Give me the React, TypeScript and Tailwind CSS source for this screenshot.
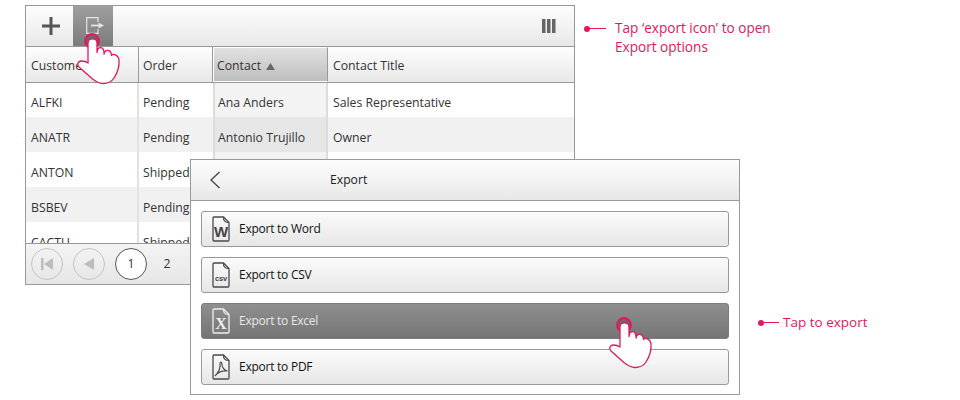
import React from "react";

const PINK = "#e0195f";

function Hand({ className }: { className: string }) {
  return (
    <svg className={className} width="60" height="85" viewBox="0 0 60 85" fill="none">
      <circle cx="22" cy="36" r="6.8" fill="#555" fillOpacity="0.55" stroke={PINK} strokeWidth="2.2" />
      <path
        d="M18 58 L18 38 C18 32.5 27 32.5 27 38 L27 47.5 C27.5 41 33.5 41 34 47.5 L34 49 C35 44 41 44 41.5 50.5 C42.5 48.5 48.5 49.5 49 55 C49.5 61 47.5 67.5 44 73 C41 77.5 38 78.5 33 78.5 C28 78.5 25 76 22 73.5 L9 62 C6.5 59.5 8 56 11.5 56 C14 56 16 56.5 18 58 Z"
        fill="#fff"
        stroke={PINK}
        strokeWidth="1.3"
        strokeLinejoin="round"
      />
    </svg>
  );
}

function Doc({ children, stroke = "#4a4a4a" }: { children?: React.ReactNode; stroke?: string }) {
  return (
    <svg width="18" height="26" viewBox="0 0 18 26" fill="none" className="shrink-0">
      <path d="M1 2 Q1 1 2 1 L11.5 1 L17 6.5 L17 24 Q17 25 16 25 L2 25 Q1 25 1 24 Z" stroke={stroke} strokeWidth="1.3" fill="none" />
      <path d="M11.5 1 Q11 6.5 17 6.5" stroke={stroke} strokeWidth="1.1" />
      {children}
    </svg>
  );
}

const rows = [
  ["ALFKI", "Pending", "Ana Anders", "Sales Representative"],
  ["ANATR", "Pending", "Antonio Trujillo", "Owner"],
  ["ANTON", "Shipped", "Antonio Moreno", "Owner"],
  ["BSBEV", "Pending", "Elizabeth Brown", "Sales Representative"],
  ["CACTU", "Shipped", "Patricio Simpson", "Sales Agent"],
];

function ExportButton({ label, icon, active }: { label: string; icon: React.ReactNode; active?: boolean }) {
  return (
    <div
      className={
        active
          ? "flex h-[36px] items-center gap-[9px] rounded-[3px] border border-[#7c7c7c] bg-gradient-to-b from-[#8f8f8f] to-[#757575] pl-[10px] text-[12px] tracking-[-0.25px] text-[#e8e8e8]"
          : "flex h-[36px] items-center gap-[9px] rounded-[3px] border border-[#999] bg-gradient-to-b from-[#fbfbfb] to-[#e6e6e6] pl-[10px] text-[12px] tracking-[-0.25px] text-[#111]"
      }
    >
      {icon}
      <span>{label}</span>
    </div>
  );
}

export default function App() {
  return (
    <div
      className="relative flex h-[400px] w-[960px] items-start overflow-hidden bg-white pt-[5px] pl-[25px] text-[#333]"
      style={{ fontFamily: '"Open Sans", "Noto Sans", sans-serif' }}
    >
      {/* Grid window */}
      <div className="flex h-[280px] w-[550px] shrink-0 flex-col border border-[#999] text-[12.25px]">
        <div className="flex h-[40px] shrink-0 items-stretch bg-gradient-to-b from-[#fdfdfd] to-[#e8e8e8]">
          <div className="flex w-[47px] items-center justify-center">
            <svg width="18" height="18" viewBox="0 0 18 18" className="ml-[3px]">
              <path d="M7.5 0h3v7.5H18v3h-7.5V18h-3v-7.5H0v-3h7.5z" fill="#555" />
            </svg>
          </div>
          <div className="flex w-[40px] items-start justify-start bg-gradient-to-b from-[#9e9e9e] to-[#7c7c7c] pt-[11px] pl-[13px]">
            <svg width="18" height="17" viewBox="0 0 18 17" fill="none">
              <path d="M12 5V0.7H0.7v15.6H12V12" stroke="#e4e4e4" strokeWidth="1.2" />
              <path d="M5 8.5h8" stroke="#e4e4e4" strokeWidth="1.8" />
              <path d="M12.5 5.5 L18 8.5 L12.5 11.5 Z" fill="#e4e4e4" />
            </svg>
          </div>
          <div className="flex flex-1 items-center justify-end pr-[18px]">
            <svg width="14" height="14" viewBox="0 0 14 14">
              <path d="M0 0h3.5v14H0zM5 0h3.5v14H5zM10 0h3.5v14H10z" fill="#666" />
            </svg>
          </div>
        </div>

        <div className="flex h-[37px] shrink-0 border-y border-[#999] bg-gradient-to-b from-[#fdfdfd] to-[#e8e8e8]">
          <div className="flex w-[113px] items-center border-r border-[#999] pt-[4px] pl-[5px]">Customer</div>
          <div className="flex w-[74px] items-center border-r border-[#999] pt-[4px] pl-[4px]">Order</div>
          <div className="flex w-[115px] items-center gap-[5px] border border-r-[#999] border-white bg-gradient-to-b from-[#e2e2e2] to-[#bdbdbd] pt-[4px] pl-[3px]">
            Contact
            <svg width="9" height="7" viewBox="0 0 9 7">
              <path d="M4.5 0 L9 7 H0 Z" fill="#666" />
            </svg>
          </div>
          <div className="flex flex-1 items-center pt-[4px] pl-[5px]">Contact Title</div>
        </div>

        <div className="flex-1 overflow-hidden">
          {rows.map((r, i) => (
            <div
              key={r[0]}
              className={
                (i === 0 ? "h-[34px] " : "h-[35px] ") +
                (i % 2 === 1 ? "flex items-center bg-[#f1f1f1]" : "flex items-center bg-white")
              }
            >
              <div className="flex h-full w-[113px] items-center border-r-2 border-[#e2e2e2] pt-[7px] pl-[5px]">{r[0]}</div>
              <div className="flex h-full w-[74px] items-center pt-[7px] pl-[4px]">{r[1]}</div>
              <div
                className={
                  i % 2 === 1
                    ? "flex h-full w-[115px] items-center border-x-2 border-[#dcdcdc] bg-[#e6e6e6] pt-[7px] pl-[3px]"
                    : "flex h-full w-[115px] items-center border-x-2 border-[#dcdcdc] bg-[#f3f3f3] pt-[7px] pl-[3px]"
                }
              >
                {r[2]}
              </div>
              <div className="flex h-full flex-1 items-center pt-[7px] pl-[5px]">{r[3]}</div>
            </div>
          ))}
        </div>

        <div className="flex h-[41px] shrink-0 items-center gap-[10px] border-t border-[#999] bg-gradient-to-b from-[#f4f4f4] to-[#e6e6e6] pl-[5px]">
          <div className="flex h-[32px] w-[32px] items-center justify-center rounded-full border border-[#c4c4c4]">
            <svg width="12" height="12" viewBox="0 0 12 12">
              <path d="M0 0h2.5v12H0zM12 0v12L3 6z" fill="#bdbdbd" />
            </svg>
          </div>
          <div className="flex h-[32px] w-[32px] items-center justify-center rounded-full border border-[#c4c4c4]">
            <svg width="10" height="12" viewBox="0 0 10 12">
              <path d="M10 0v12L0 6z" fill="#bdbdbd" />
            </svg>
          </div>
          <div className="flex h-[32px] w-[32px] items-center justify-center rounded-full border border-[#555] bg-white">1</div>
          <div className="flex h-[32px] w-[20px] items-center justify-center">2</div>
        </div>
      </div>

      {/* Top annotation */}
      <div className="ml-[10px] flex items-start pt-[14px] text-[13.6px] leading-[19px] text-[#e0195f]">
        <div className="mt-[9px] h-[1px] w-[21px] shrink-0 bg-[#e0195f]" />
        <div className="ml-[9px] w-[180px] -translate-y-[1px]">
          Tap ‘export icon’ to open
          <br />
          Export options
        </div>
        <div className="absolute top-[26px] left-[584px] h-[6px] w-[6px] rounded-full bg-[#e0195f]" />
      </div>

      {/* Export panel */}
      <div className="absolute top-[159px] left-[190px] flex h-[236px] w-[550px] flex-col border border-[#999] bg-white">
        <div className="relative flex h-[41px] shrink-0 items-center border-b border-[#999] bg-gradient-to-b from-[#fdfdfd] to-[#e8e8e8] pl-[139px] text-[12.2px] text-[#222]">
          <svg width="10" height="18" viewBox="0 0 10 18" fill="none" className="absolute top-[11px] left-[19px]">
            <path d="M9.5 1 L1 9 L9.5 17" stroke="#444" strokeWidth="1.3" />
          </svg>
          Export
        </div>
        <div className="flex flex-col gap-[10px] px-[10px] pt-[10px]">
          <ExportButton
            label="Export to Word"
            icon={
              <Doc>
                <text x="9" y="20.5" textAnchor="middle" fontSize="15" fontWeight="700" fill="#444" fontFamily="Liberation Sans">W</text>
              </Doc>
            }
          />
          <ExportButton
            label="Export to CSV"
            icon={
              <Doc>
                <text x="9" y="18.5" textAnchor="middle" fontSize="7.5" fontWeight="700" fill="#444" fontFamily="Liberation Sans">csv</text>
              </Doc>
            }
          />
          <ExportButton
            active
            label="Export to Excel"
            icon={
              <Doc stroke="#eee">
                <text x="9" y="21" textAnchor="middle" fontSize="16" fontWeight="700" fill="#eee" fontFamily="Liberation Serif">X</text>
              </Doc>
            }
          />
          <ExportButton
            label="Export to PDF"
            icon={
              <Doc>
                <path d="M3 22 C6 19 8.5 14 8 9.5 C8 7.5 9.8 7.5 9.8 9.5 C9.8 13 12 16.5 15.5 17 C11 16.5 6 18 3 22 Z" stroke="#4a4a4a" strokeWidth="1.2" fill="none" />
              </Doc>
            }
          />
        </div>
      </div>

      {/* Bottom annotation */}
      <div className="absolute top-[313px] left-[758px] flex items-center text-[13.5px] leading-[19px] text-[#e0195f]">
        <div className="h-[6px] w-[6px] rounded-full bg-[#e0195f]" />
        <div className="h-[1px] w-[15px] bg-[#e0195f]" />
        <span className="ml-[4px]">Tap to export</span>
      </div>

      <Hand className="absolute top-[5px] left-[70px]" />
      <Hand className="absolute top-[289px] left-[602px]" />
    </div>
  );
}
